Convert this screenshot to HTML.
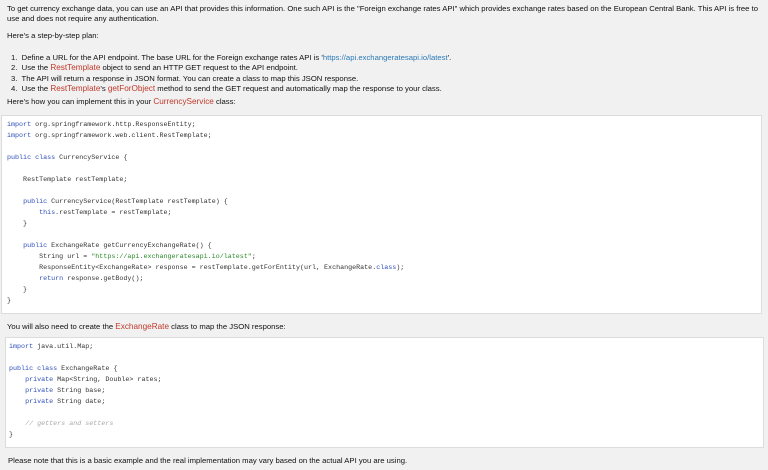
<!DOCTYPE html>
<html><head><meta charset="utf-8"><style>
body{margin:0;background:#f1f1f1;width:768px;height:470px;overflow:hidden;font-family:"Liberation Sans",sans-serif;font-size:7.7px;color:#111;}
p{margin:0;position:absolute;left:7px;white-space:nowrap;}
.r{color:#c0392b;font-size:8.2px}
.u{color:#2a7ab8}
.box{position:absolute;background:#fff;border:1px solid #dcdcdc;}
pre{margin:0;font-family:"Liberation Mono",monospace;font-size:6.7px;line-height:11px;color:#333;position:absolute;}
.k{color:#2f4fb8}.s{color:#2a8a2a}.c{color:#aaa;font-style:italic}
</style></head><body>
<p style="top:4px">To get currency exchange data, you can use an API that provides this information. One such API is the "Foreign exchange rates API" which provides exchange rates based on the European Central Bank. This API is free to</p>
<p style="top:14px">use and does not require any authentication.</p>
<p style="top:31px">Here's a step-by-step plan:</p>
<p style="top:53px;left:11px">1.&nbsp; Define a URL for the API endpoint. The base URL for the Foreign exchange rates API is '<span class="u">https://api.exchangeratesapi.io/latest</span>'.</p>
<p style="top:63px;left:11px">2.&nbsp; Use the <span class="r">RestTemplate</span> object to send an HTTP GET request to the API endpoint.</p>
<p style="top:74px;left:11px">3.&nbsp; The API will return a response in JSON format. You can create a class to map this JSON response.</p>
<p style="top:84px;left:11px">4.&nbsp; Use the <span class="r">RestTemplate</span>'s <span class="r">getForObject</span> method to send the GET request and automatically map the response to your class.</p>
<p style="top:97px">Here's how you can implement this in your <span class="r">CurrencyService</span> class:</p>
<div class="box" style="left:1px;top:115px;width:759px;height:197px"></div>
<pre style="left:7px;top:120px"><span class="k">import</span> org.springframework.http.ResponseEntity;
<span class="k">import</span> org.springframework.web.client.RestTemplate;

<span class="k">public class</span> CurrencyService {

    RestTemplate restTemplate;

    <span class="k">public</span> CurrencyService(RestTemplate restTemplate) {
        <span class="k">this</span>.restTemplate = restTemplate;
    }

    <span class="k">public</span> ExchangeRate getCurrencyExchangeRate() {
        String url = <span class="s">"https://api.exchangeratesapi.io/latest"</span>;
        ResponseEntity&lt;ExchangeRate&gt; response = restTemplate.getForEntity(url, ExchangeRate.<span class="k">class</span>);
        <span class="k">return</span> response.getBody();
    }
}</pre>
<p style="top:322px">You will also need to create the <span class="r">ExchangeRate</span> class to map the JSON response:</p>
<div class="box" style="left:5px;top:337px;width:757px;height:109px"></div>
<pre style="left:9px;top:342px"><span class="k">import</span> java.util.Map;

<span class="k">public class</span> ExchangeRate {
    <span class="k">private</span> Map&lt;String, Double&gt; rates;
    <span class="k">private</span> String base;
    <span class="k">private</span> String date;

    <span class="c">// getters and setters</span>
}</pre>
<p style="top:456px;left:8px">Please note that this is a basic example and the real implementation may vary based on the actual API you are using.</p>
</body></html>
